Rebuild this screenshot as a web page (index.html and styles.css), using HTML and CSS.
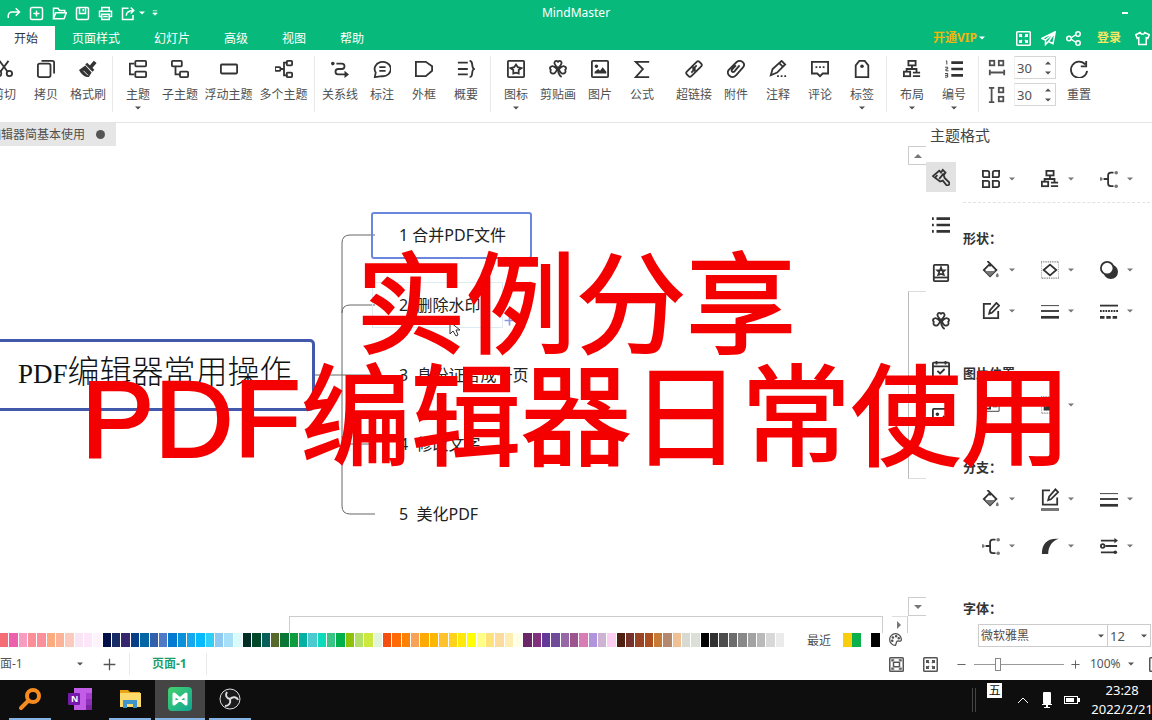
FILE: index.html
```html
<!DOCTYPE html>
<html lang="zh-CN">

<head>
    <meta charset="UTF-8">
    <meta name="viewport" content="width=device-width, initial-scale=1.0">
    <title>MindMaster</title>
    <link rel="stylesheet" href="styles.css">
</head>

<body>
    <svg class="sprite" aria-hidden="true">
        <symbol id="caret" viewBox="0 0 8 8"><path d="M0 2h8L4 6z" fill="currentColor" stroke="none"/></symbol>
        <symbol id="redo" viewBox="0 0 20 20"><path d="M13 3l5 5-5 5M18 8H8a5 5 0 0 0-5 5v3"/></symbol>
        <symbol id="new" viewBox="0 0 20 20"><rect x="2" y="2" width="16" height="16" rx="2"/><path d="M10 6v8M6 10h8"/></symbol>
        <symbol id="open" viewBox="0 0 20 20"><path d="M2 17V3h6l2 3h7v3M2 17l3-8h14l-3 8z"/></symbol>
        <symbol id="save" viewBox="0 0 20 20"><rect x="2" y="2" width="16" height="16" rx="2"/><path d="M6 2v8h8V2M11 4v3"/></symbol>
        <symbol id="print" viewBox="0 0 20 20"><path d="M5 7V2h10v5M5 14H2V7h16v7h-3M5 11h10v7H5zM7 14h6"/></symbol>
        <symbol id="export" viewBox="0 0 20 20"><path d="M10 3H2v15h14v-6M7 13c0-5 3-7 10-7M13 2l4 4-4 4"/></symbol>
        <symbol id="more" viewBox="0 0 8 10"><path d="M1 2h6M1 5h6L4 8z" fill="currentColor"/></symbol>
        <symbol id="full" viewBox="0 0 20 20"><rect x="1" y="1" width="18" height="18" rx="1"/><path d="M5 8V5h3M5 5l3 3M12 5h3v3M15 5l-3 3M5 12v3h3M5 15l3-3M15 12v3h-3M15 15l-3-3"/></symbol>
        <symbol id="send" viewBox="0 0 20 20"><path d="M1 10L19 1l-3 16-6-3-4 4v-6zM6 12L19 1l-9 13"/></symbol>
        <symbol id="share" viewBox="0 0 20 20"><circle cx="4" cy="10" r="3"/><circle cx="16" cy="4" r="3"/><circle cx="16" cy="16" r="3"/><path d="M7 9l6-4M7 11l6 4"/></symbol>
        <symbol id="shirt" viewBox="0 0 20 20"><path d="M7 2L1 5l2 5 2-1v9h10V9l2 1 2-5-6-3c-1 3-5 3-6 0z"/></symbol>

        <symbol id="cut" viewBox="0 0 20 20"><circle cx="4" cy="15" r="3"/><circle cx="16" cy="15" r="3"/><path d="M6 13L15 1M14 13L5 1"/></symbol>
        <symbol id="copy" viewBox="0 0 20 20"><rect x="1" y="4" width="14" height="15" rx="2"/><path d="M5 1h12a2 2 0 0 1 2 2v12"/></symbol>
        <symbol id="brush" viewBox="0 0 20 20"><path d="M0 11l7-5 7 8-3 5h-2c-4-1-7-4-9-8z" fill="currentColor" stroke="none"/><path d="M5 12l5 5" stroke="#fff" stroke-width="1"/><path d="M8 4l8 8" stroke-width="3"/><path d="M13 8l5-6" stroke-width="4"/></symbol>
        <symbol id="topic" viewBox="0 0 20 20"><path d="M6 4H1v12h5"/><rect x="7" y="1" width="12" height="6" rx="1"/><rect x="7" y="13" width="12" height="6" rx="1"/></symbol>
        <symbol id="subtopic" viewBox="0 0 20 20"><rect x="1" y="1" width="11" height="6" rx="1"/><rect x="10" y="13" width="9" height="6" rx="1"/><path d="M5 7v9h5"/></symbol>
        <symbol id="floating" viewBox="0 0 20 20"><rect x="1" y="5" width="18" height="10" rx="1"/></symbol>
        <symbol id="multi" viewBox="0 0 20 20"><rect x="0" y="8" width="6" height="4" rx="1"/><path d="M6 10h4M14 3h-4v14h4"/><rect x="13" y="1" width="6" height="5" rx="1"/><rect x="13" y="14" width="6" height="5" rx="1"/></symbol>
        <symbol id="relation" viewBox="0 0 20 20"><circle cx="2" cy="4" r="2" fill="currentColor" stroke="none"/><path d="M6 4h6a3 3 0 0 1 0 6H8a3 3 0 0 0 0 6h8"/><path d="M15 12l5 4-5 4z" fill="currentColor" stroke="none"/></symbol>
        <symbol id="callout" viewBox="0 0 20 20"><path d="M2 19l1-5a9 8 0 1 1 7 4zM7 8h7M7 12h7"/></symbol>
        <symbol id="outline" viewBox="0 0 20 20"><path d="M1 2h11l7 5v5l-7 6H1z"/></symbol>
        <symbol id="summary" viewBox="0 0 20 20"><path d="M1 3h11M1 10h11M1 16h11M14 1c5 0 1 7 5 9-4 1 0 9-5 9"/></symbol>
        <symbol id="mark" viewBox="0 0 20 20"><rect x="1" y="1" width="18" height="18" rx="1"/><path d="M10 5l2 3 4 1-3 2v4l-3-1-3 1V11L4 9l4-1z"/></symbol>
        <symbol id="clover" viewBox="0 0 20 20"><path d="M10 9C7 6 6 5 6 3c1-3 3-2 4-1 1-1 3-2 4 1 0 2-1 3-4 6zM9 10C7 8 5 6 3 7c-3 1-2 3-1 4-1 2 0 4 2 4 2 1 4-2 5-5zM11 10c2-2 4-4 6-3 3 1 2 3 1 4 1 2 0 4-2 4-2 1-4-2-5-5zM10 10c0 4 1 7 4 9"/></symbol>
        <symbol id="image" viewBox="0 0 20 20"><rect x="1" y="1" width="18" height="18" rx="1"/><circle cx="6" cy="7" r="1" fill="currentColor"/><path d="M4 15v-2l4-3 2 2 3-4 4 5v2z" fill="currentColor" stroke="none"/></symbol>
        <symbol id="sigma" viewBox="0 0 20 20"><path d="M18 2H3l8 8-8 9h15"/></symbol>
        <symbol id="link" viewBox="0 0 20 20"><path d="M7 8l6-6c1-1 2-1 3 0l2 2c1 1 1 2 0 3l-6 6-3-3 4-4M13 12l-6 6c-1 1-2 1-3 0l-2-2c-1-1-1-2 0-3l6-6 3 3-4 4"/></symbol>
        <symbol id="clip" viewBox="0 0 20 20"><path d="M7 6l4-4c5-3 10 2 7 6l-8 9c-4 5-12-1-8-6l6-6M14 6l-6 7c-2 1-4-1-2-3l4-4"/></symbol>
        <symbol id="note" viewBox="0 0 20 20"><path d="M2 17l2-7L14 1l4 4-9 9zM12 4l3 3"/><path d="M9 18h2M13 18h2M17 18h2"/></symbol>
        <symbol id="comment" viewBox="0 0 20 20"><path d="M1 2h18v13h-6l-3 3-3-3H1zM5 8h2M9 8h2M13 8h2"/></symbol>
        <symbol id="tag" viewBox="0 0 20 20"><path d="M3 19V6l4-5h6l4 5v13z"/><circle cx="10" cy="7" r="2" fill="currentColor" stroke="none"/></symbol>
        <symbol id="layout" viewBox="0 0 20 20"><rect x="6" y="1" width="8" height="5"/><path d="M10 6v4M4 13v-3h11v3M11 14h8M11 18h8"/><rect x="1" y="13" width="7" height="5"/></symbol>
        <symbol id="number" viewBox="0 0 20 20"><path d="M7 3h13M7 10h13M7 17h13" stroke-width="3"/><path d="M1 1h1v4M0 8h3v2H1v2h3M0 15h3v4H0M0 17h3" stroke-width="1"/></symbol>
        <symbol id="hgap" viewBox="0 0 20 20"><rect x="2" y="2" width="5" height="5"/><rect x="12" y="2" width="5" height="5"/><path d="M2 12v6M18 12v6M2 15h16"/></symbol>
        <symbol id="vgap" viewBox="0 0 20 20"><rect x="12" y="2" width="5" height="5"/><rect x="12" y="12" width="5" height="5"/><path d="M1 2h6M1 18h6M4 2v16"/></symbol>
        <symbol id="reset" viewBox="0 0 20 20"><path d="M17 5a9 9 0 1 0 2 7M18 1v6h-6"/></symbol>

        <symbol id="paint" viewBox="0 0 20 20"><path d="M1 9l7-6 2 2 2-3 3 3-2 3 1 3 5 5c1 2-1 4-3 3l-4-5-3 1zM8 12l5-6M3 11l3-3"/></symbol>
        <symbol id="list" viewBox="0 0 20 20"><path d="M0 3h2M5 3h15M0 10h2M5 10h15M0 17h2M5 17h15" stroke-width="3"/></symbol>
        <symbol id="book" viewBox="0 0 20 20"><rect x="2" y="1" width="16" height="18" rx="1"/><path d="M2 15h16"/><path d="M10 4l1 3h3l-2 2 1 3-3-1-3 1 1-3-2-2h3z"/></symbol>
        <symbol id="task" viewBox="0 0 20 20"><rect x="1" y="3" width="18" height="16" rx="1"/><path d="M1 7h18M5 1v4M15 1v4M6 12l3 3 5-5"/></symbol>
        <symbol id="grid" viewBox="0 0 20 20"><path d="M1 1h5q2 0 2 2v5H3Q1 8 1 6zM19 1h-5q-2 0-2 2v5h5q2 0 2-2zM1 12h5q2 0 2 2v5H1zM12 12h5q2 0 2 2v3q0 2-2 2h-5z"/></symbol>
        <symbol id="branch" viewBox="0 0 20 20"><g fill="#777" stroke="none"><circle cx="1" cy="10" r="2"/><circle cx="18" cy="3" r="2"/><circle cx="18" cy="18" r="2"/></g><path d="M4 10h5M15 3h-3a3 3 0 0 0-3 3v9a3 3 0 0 0 3 3h3"/></symbol>
        <symbol id="fill" viewBox="0 0 20 20"><path d="M6 0l3 3v3M9 3l7 7-7 7-7-7z"/><path d="M3 11h12l-6 6z" fill="#777" stroke="none"/><path d="M17 13c3 4 1 5 0 5s-3-1 0-5z" fill="#777" stroke="none"/></symbol>
        <symbol id="shape" viewBox="0 0 20 20"><rect x="0" y="1" width="20" height="18" stroke-width="1" stroke-dasharray="1 1"/><path d="M3 10l7-6 7 6-7 6z"/></symbol>
        <symbol id="shadow" viewBox="0 0 20 20"><circle cx="12" cy="12" r="7" fill="currentColor"/><circle cx="8" cy="8" r="7" fill="#fff"/></symbol>
        <symbol id="edit" viewBox="0 0 20 20"><path d="M10 2H2v16h16v-8M8 13l1-4 7-8 3 3-8 8z"/></symbol>
        <symbol id="lines" viewBox="0 0 20 20"><path d="M0 4h20" stroke-width="1"/><path d="M0 10h20"/><path d="M0 17h20" stroke-width="3"/></symbol>
        <symbol id="dashes" viewBox="0 0 20 20"><path d="M0 4h20"/><path d="M0 10h20" stroke-dasharray="2 1"/><path d="M0 17h20" stroke-width="3" stroke-dasharray="5 2"/></symbol>
        <symbol id="pictext" viewBox="0 0 20 20"><path d="M1 6h8v8H1z"/><path d="M12 4h7v13H1M12 8h5M12 12h5" stroke-width="1"/></symbol>
        <symbol id="picbox" viewBox="0 0 20 20"><rect x="0" y="1" width="20" height="18" stroke-width="1" stroke-dasharray="1 1"/><path d="M4 5h12v10H4z"/><path d="M5 14l4-5 3 2 3-1v4z" fill="currentColor"/></symbol>
        <symbol id="horn" viewBox="0 0 20 20"><path d="M1 19C1 8 6 1 20 2c-7 2-12 8-12 17z" fill="currentColor" stroke="none"/></symbol>
        <symbol id="arrows" viewBox="0 0 20 20"><path d="M1 4h16M6 10h13M1 17h16"/><circle cx="3" cy="10" r="2"/><path d="M16 1l4 3-4 3z" fill="currentColor" stroke="none"/><circle cx="17" cy="17" r="2" fill="currentColor" stroke="none"/></symbol>
        <symbol id="palette" viewBox="0 0 20 20"><path d="M10 19a9 9 0 1 1 9-9c0 3-2 3-5 2-3 0-2 2-3 4z"/><circle cx="6" cy="7" r="1"/><circle cx="11" cy="5" r="1"/><circle cx="15" cy="8" r="1"/><circle cx="5" cy="12" r="1"/></symbol>
        <symbol id="fit" viewBox="0 0 20 20"><rect x="1" y="1" width="18" height="18" rx="1"/><rect x="6" y="7" width="8" height="6"/><path d="M4 6V4h3M13 4h3v2M4 14v2h3M13 16h3v-2"/></symbol>
        <symbol id="plus" viewBox="0 0 20 20"><path d="M10 1v18M1 10h18"/></symbol>
        <symbol id="minus" viewBox="0 0 20 20"><path d="M1 10h18"/></symbol>
    </svg>

    <header class="titlebar">
        <div class="title-row">
            <div class="quick">
                <button aria-label="重做"><svg><use href="#redo"/></svg></button>
                <button aria-label="新建"><svg><use href="#new"/></svg></button>
                <button aria-label="打开"><svg><use href="#open"/></svg></button>
                <button aria-label="保存"><svg><use href="#save"/></svg></button>
                <button aria-label="打印"><svg><use href="#print"/></svg></button>
                <button aria-label="导出"><svg><use href="#export"/></svg></button>
                <svg class="caret"><use href="#caret"/></svg>
                <svg class="caret more"><use href="#more"/></svg>
            </div>
            <span class="app-name">MindMaster</span>
            <button class="minimize" aria-label="最小化"><span></span></button>
        </div>
        <div class="tab-row">
            <nav class="tabs">
                <a href="#" class="active">开始</a>
                <a href="#">页面样式</a>
                <a href="#">幻灯片</a>
                <a href="#">高级</a>
                <a href="#">视图</a>
                <a href="#">帮助</a>
            </nav>
            <div class="account">
                <a href="#" class="vip">开通VIP</a>
                <svg class="caret"><use href="#caret"/></svg>
                <button class="first" aria-label="全屏"><svg><use href="#full"/></svg></button>
                <button aria-label="发送"><svg><use href="#send"/></svg></button>
                <button aria-label="分享"><svg><use href="#share"/></svg></button>
                <a href="#" class="login">登录</a>
                <button class="skin" aria-label="皮肤"><svg><use href="#shirt"/></svg></button>
            </div>
        </div>
    </header>

    <div class="ribbon">
        <div class="group">
            <button><svg><use href="#cut"/></svg>剪切</button>
            <button><svg><use href="#copy"/></svg>拷贝</button>
            <button><svg><use href="#brush"/></svg>格式刷</button>
        </div>
        <div class="group">
            <button><svg><use href="#topic"/></svg>主题<svg class="caret"><use href="#caret"/></svg></button>
            <button><svg><use href="#subtopic"/></svg>子主题</button>
            <button class="wide"><svg><use href="#floating"/></svg>浮动主题</button>
            <button class="wide"><svg><use href="#multi"/></svg>多个主题</button>
        </div>
        <div class="group">
            <button><svg><use href="#relation"/></svg>关系线</button>
            <button><svg><use href="#callout"/></svg>标注</button>
            <button><svg><use href="#outline"/></svg>外框</button>
            <button><svg><use href="#summary"/></svg>概要</button>
        </div>
        <div class="group plain">
            <button><svg><use href="#mark"/></svg>图标<svg class="caret"><use href="#caret"/></svg></button>
            <button><svg><use href="#clover"/></svg>剪贴画</button>
            <button><svg><use href="#image"/></svg>图片</button>
            <button><svg><use href="#sigma"/></svg>公式</button>
        </div>
        <div class="group">
            <button><svg><use href="#link"/></svg>超链接</button>
            <button><svg><use href="#clip"/></svg>附件</button>
            <button><svg><use href="#note"/></svg>注释</button>
            <button><svg><use href="#comment"/></svg>评论</button>
            <button><svg><use href="#tag"/></svg>标签<svg class="caret"><use href="#caret"/></svg></button>
        </div>
        <div class="group">
            <button><svg><use href="#layout"/></svg>布局<svg class="caret"><use href="#caret"/></svg></button>
            <button><svg><use href="#number"/></svg>编号<svg class="caret"><use href="#caret"/></svg></button>
        </div>
        <div class="spacing">
            <label><svg><use href="#hgap"/></svg><span class="spin"><input type="number" value="30" aria-label="水平间距"><span class="steps"><svg class="up"><use href="#caret"/></svg><svg><use href="#caret"/></svg></span></span></label>
            <label><svg><use href="#vgap"/></svg><span class="spin"><input type="number" value="30" aria-label="垂直间距"><span class="steps"><svg class="up"><use href="#caret"/></svg><svg><use href="#caret"/></svg></span></span></label>
        </div>
        <div class="group last">
            <button><svg><use href="#reset"/></svg>重置</button>
        </div>
    </div>

    <main class="workspace">
        <div class="editor">
            <div class="doc-tabs"><a href="#" class="doc-tab"><span>编辑器简基本使用</span><i></i></a></div>
            <div class="stage">
                <div class="canvas">
                    <svg class="links" width="600" height="470">
                        <path d="M315 229h60M375 89h-25q-8 0-8 8v263q0 8 8 8h25M342 167q0-8 8-8h25M342 290q0 8 8 8h25"/>
                    </svg>
                    <div class="node root"><span>PDF</span>编辑器常用操作</div>
                    <div class="node topic selected n1">1 合并PDF文件</div>
                    <div class="node topic hover n2">2&nbsp; 删除水印</div>
                    <div class="node topic n3">3&nbsp; 身份证合成一页</div>
                    <div class="node topic n4">4&nbsp; 修改文字</div>
                    <div class="node topic n5">5&nbsp; 美化PDF</div>
                    <svg class="add" viewBox="0 0 20 20"><use href="#plus"/></svg>
                    <svg class="cursor" viewBox="0 0 12 16"><path d="M1 1v12l3-3 3 5 2-1-2-5h4z"/></svg>
                </div>
                <div class="vscroll">
                    <button aria-label="向上滚动"><svg class="caret up"><use href="#caret"/></svg></button>
                    <div class="thumb"></div>
                    <button class="down" aria-label="向下滚动"><svg class="caret"><use href="#caret"/></svg></button>
                </div>
            </div>
            <div class="hscroll">
                <div class="thumb"></div>
                <button aria-label="向右滚动"><svg class="caret right"><use href="#caret"/></svg></button>
            </div>
            <div class="colors">
                <div class="swatches" id="swatches"></div>
                <div class="recent">
                    <span>最近</span>
                    <i class="yellow"></i><i class="green"></i><i class="white"></i><i class="black"></i>
                    <svg><use href="#palette"/></svg>
                </div>
            </div>
        </div>

        <aside class="panel">
            <h2>主题格式</h2>
            <div class="panel-body">
                <nav class="side">
                    <button class="active" aria-label="主题格式"><svg><use href="#paint"/></svg></button>
                    <button aria-label="大纲"><svg><use href="#list"/></svg></button>
                    <button aria-label="图标"><svg><use href="#book"/></svg></button>
                    <button aria-label="剪贴画"><svg><use href="#clover"/></svg></button>
                    <button aria-label="任务"><svg><use href="#task"/></svg></button>
                    <button aria-label="图片"><svg><use href="#image"/></svg></button>
                </nav>
                <div class="format">
                    <div class="row top">
                        <button aria-label="样式"><svg><use href="#grid"/></svg><svg class="caret"><use href="#caret"/></svg></button>
                        <button aria-label="布局"><svg><use href="#layout"/></svg><svg class="caret"><use href="#caret"/></svg></button>
                        <button aria-label="连线"><svg><use href="#branch"/></svg><svg class="caret"><use href="#caret"/></svg></button>
                    </div>
                    <h3 class="shape-title">形状：</h3>
                    <div class="row">
                        <button aria-label="填充"><svg><use href="#fill"/></svg><svg class="caret"><use href="#caret"/></svg></button>
                        <button aria-label="形状"><svg><use href="#shape"/></svg><svg class="caret"><use href="#caret"/></svg></button>
                        <button aria-label="阴影"><svg><use href="#shadow"/></svg><svg class="caret"><use href="#caret"/></svg></button>
                    </div>
                    <div class="row">
                        <button aria-label="边框颜色"><svg><use href="#edit"/></svg><svg class="caret"><use href="#caret"/></svg></button>
                        <button aria-label="边框粗细"><svg><use href="#lines"/></svg><svg class="caret"><use href="#caret"/></svg></button>
                        <button aria-label="边框线型"><svg><use href="#dashes"/></svg><svg class="caret"><use href="#caret"/></svg></button>
                    </div>
                    <h3>图片位置</h3>
                    <div class="row">
                        <button aria-label="图文排列"><svg><use href="#pictext"/></svg><svg class="caret"><use href="#caret"/></svg></button>
                        <button aria-label="图片大小"><svg><use href="#picbox"/></svg><svg class="caret"><use href="#caret"/></svg></button>
                    </div>
                    <h3>分支：</h3>
                    <div class="row">
                        <button aria-label="分支填充"><svg><use href="#fill"/></svg><svg class="caret"><use href="#caret"/></svg></button>
                        <button aria-label="分支颜色"><svg class="underlined"><use href="#edit"/></svg><svg class="caret"><use href="#caret"/></svg></button>
                        <button aria-label="分支粗细"><svg><use href="#lines"/></svg><svg class="caret"><use href="#caret"/></svg></button>
                    </div>
                    <div class="row spaced">
                        <button aria-label="分支形状"><svg><use href="#branch"/></svg><svg class="caret"><use href="#caret"/></svg></button>
                        <button aria-label="分支样式"><svg><use href="#horn"/></svg><svg class="caret"><use href="#caret"/></svg></button>
                        <button aria-label="箭头"><svg><use href="#arrows"/></svg><svg class="caret"><use href="#caret"/></svg></button>
                    </div>
                    <h3>字体：</h3>
                    <div class="font-row">
                        <label class="pick family"><select aria-label="字体"><option>微软雅黑</option></select><svg class="caret"><use href="#caret"/></svg></label>
                        <label class="pick size"><select aria-label="字号"><option>12</option></select><svg class="caret"><use href="#caret"/></svg></label>
                    </div>
                </div>
            </div>
        </aside>
    </main>

    <div class="statusbar">
        <div class="pages">
            <button class="page-pick"><span>页面-1</span><svg class="caret"><use href="#caret"/></svg></button>
            <button class="add-page" aria-label="新建页面"><svg><use href="#plus"/></svg></button>
            <a href="#" class="page">页面-1</a>
        </div>
        <div class="zoom">
            <button aria-label="适应页面"><svg><use href="#fit"/></svg></button>
            <button aria-label="全屏"><svg><use href="#full"/></svg></button>
            <button class="small" aria-label="缩小"><svg><use href="#minus"/></svg></button>
            <input type="range" min="0" max="100" value="25" aria-label="缩放">
            <button class="small" aria-label="放大"><svg><use href="#plus"/></svg></button>
            <span>100%</span>
            <svg class="caret"><use href="#caret"/></svg>
            <button class="window" aria-label="窗口"><svg><use href="#full"/></svg></button>
        </div>
    </div>

    <footer class="taskbar">
        <div class="apps">
            <button class="open" aria-label="搜索">
                <svg viewBox="0 0 24 24"><circle cx="15" cy="9" r="6" fill="none" stroke="#f68b1f" stroke-width="4"/><path d="M10 14l-7 7" stroke="#f68b1f" stroke-width="4" stroke-linecap="round"/></svg>
            </button>
            <button aria-label="OneNote">
                <svg viewBox="0 0 24 24"><path d="M6 1h18v22H6z" fill="#c25de8"/><path d="M18 6h6v6h-6z" fill="#a63ed0"/><path d="M18 12h6v6h-6z" fill="#8f2fba"/><path d="M18 18h6v5h-6z" fill="#7a259f"/><rect x="0" y="6" width="12" height="12" rx="1" fill="#7719aa"/><text x="3" y="15" class="logo-n">N</text></svg>
            </button>
            <button class="open" aria-label="文件资源管理器">
                <svg viewBox="0 0 24 24"><path d="M2 3h8l2 2h10v15H2z" fill="#e8a317"/><path d="M2 6h21v14H2z" fill="#fbd96b"/><path d="M5 21v-8h14v8h-4v-4H9v4z" fill="#3f94cc"/></svg>
            </button>
            <button class="open current" aria-label="MindMaster">
                <svg viewBox="0 0 24 24"><defs><linearGradient id="mm" x1="0" y1="0" x2="1" y2="1"><stop offset="0" stop-color="#45d16b"/><stop offset="1" stop-color="#0fa596"/></linearGradient></defs><rect width="24" height="24" rx="4" fill="url(#mm)"/><path d="M6 7v10l12-10v10L6 7z" fill="none" stroke="#fff" stroke-width="3" stroke-linejoin="round"/></svg>
            </button>
            <button class="open" aria-label="OBS">
                <svg viewBox="0 0 24 24"><circle cx="12" cy="12" r="10" fill="#1b1a1d" stroke="#ddd" stroke-width="1"/><path d="M12 12c-4-1-5-4-3-7M12 12c3-3 7-2 8 1M12 12c1 4-1 7-5 7" fill="none" stroke="#ddd" stroke-width="2"/></svg>
            </button>
        </div>
        <div class="tray">
            <span class="handle"></span>
            <span class="ime">五</span>
            <svg class="chevron" viewBox="0 0 12 12"><path d="M1 9l5-5 5 5"/></svg>
            <svg class="mic" viewBox="0 0 12 18"><rect x="2" y="1" width="8" height="12" rx="1"/><path d="M1 13h10v1H1zM5 14h2v3H5zM3 16h6v1H3z"/></svg>
            <svg class="battery" viewBox="0 0 16 10"><path d="M0 1h14v8H0zM14 3h2v4h-2z"/><path d="M1 2h12v6H1z" fill="#0e0e0e"/><path d="M2 3h8v4H2z"/></svg>
            <div class="clock"><span>23:28</span><span>2022/2/21</span></div>
        </div>
    </footer>

    <h1 class="caption">实例分享<br>PDF编辑器日常使用</h1>

    <script>
        const colors = [
            // reds
            "f46d75", "ee5fae", "f59ec0", "fb8f98", "fb8f9c", "fbab7e", "fcb398", "fccabd", "f9e4f5", "fce6f7", "fdf3fd",
            // blues
            "020f4a", "172b66", "35266e", "063f87", "0365a3", "3160ac", "5079c6", "0379d0", "0a8fdb", "16a8ea", "06baff", "2fcff8", "8ccaf2", "a8dff8", "dafafb",
            // greens
            "002d25", "00482a", "07605a", "56682a", "0a7638", "0f9c3f", "04b0a2", "4dcad0", "0cdcba", "3cc486", "00b04c", "8cc207", "b2e067", "cce83c", "e2f3dc",
            // oranges and yellows
            "f44f10", "ff6a05", "ff8003", "f7a258", "ffa904", "ffb600", "ffc12c", "ffd21c", "ffe80a", "ffff00", "ffff88", "ffe17a", "fbdc9c", "fdedb0", "ffffe8",
            // purples
            "6e2766", "82307e", "64389a", "704b99", "9768a8", "9d5590", "d97bb5", "b095dc", "cdb2d4", "fbcff0",
            // browns
            "4f200f", "76322a", "9a4424", "ad4e1f", "c87a36", "b4886c", "eec092", "d9d9d3", "dbdfd8",
            // greys
            "000000", "303030", "4c4c4c", "6c6c6c", "888888", "a2a2a2", "bababa", "d8d8d8", "ebebeb"
        ];

        const swatches = document.getElementById("swatches");
        colors.forEach(function (color) {
            const item = document.createElement("i");
            item.style.backgroundColor = "#" + color;
            swatches.appendChild(item);
        });
    </script>
</body>

</html>
```

FILE: styles.css
```css
* {
    box-sizing: border-box;
}

body {
    position: relative;
    display: flex;
    flex-direction: column;
    height: 100vh;
    margin: 0;
    overflow: hidden;
    background-color: #fff;
    color: #505050;
    font-family: "Noto Sans", "Noto Sans CJK SC", sans-serif;
    font-size: 12px;
    line-height: 16px;
}

button,
input,
select {
    margin: 0;
    padding: 0;
    border: none;
    background: none;
    color: inherit;
    font: inherit;
}

a {
    color: inherit;
    text-decoration: none;
}

svg {
    flex: none;
    display: block;
    width: 18px;
    height: 18px;
    overflow: visible;
    fill: none;
    stroke: currentColor;
    stroke-width: 2;
}

.sprite {
    position: absolute;
    width: 0;
    height: 0;
}

.caret {
    width: 6px;
    height: 6px;
}

.up {
    transform: rotate(180deg);
}

.right {
    transform: rotate(-90deg);
}

/* title bar */
.titlebar {
    flex: none;
    background-color: #07b97b;
    color: #fff;
}

.title-row {
    display: grid;
    grid-template-columns: 1fr auto 1fr;
    align-items: center;
    height: 26px;
}

.quick {
    display: flex;
    align-items: center;
    gap: 8px;
    padding-left: 6px;
}

.quick svg {
    width: 15px;
    height: 15px;
}

.quick .caret {
    width: 6px;
    height: 6px;
    margin-left: -5px;
}

.quick .more {
    height: 8px;
    margin-left: -1px;
    stroke-width: 1;
}

.minimize {
    justify-self: end;
    padding: 8px 24px;
}

.minimize span {
    display: block;
    width: 6px;
    height: 2px;
    background-color: #fff;
}

.tab-row {
    display: flex;
    justify-content: space-between;
    height: 24px;
}

.tabs {
    display: flex;
    margin-left: -3px;
}

.tabs a {
    padding: 5px 17px 3px;
}

.tabs .active {
    background-color: #fff;
    color: #333;
}

.account {
    display: flex;
    align-items: center;
    margin-right: 2px;
}

.account button {
    margin-right: 10px;
}

.account button svg {
    width: 15px;
    height: 15px;
}

.account .first {
    margin-left: 31px;
}

.vip {
    margin-right: 2px;
    color: #f2b50c;
    font-weight: bold;
}

.login {
    margin: 0 14px 0 6px;
    color: #f5e663;
    font-weight: bold;
}

.account .skin {
    margin-right: 0;
}

/* ribbon */
.ribbon {
    display: flex;
    flex: none;
    height: 73px;
    padding-top: 6px;
    border-bottom: 1px solid #e4e4e4;
    background-color: #fff;
}

.group {
    display: flex;
    flex: none;
    height: 56px;
    padding: 0 3px 0 4px;
    border-right: 1px solid #e8e8e8;
}

.group:first-child {
    margin-left: -21px;
}

.group.plain {
    padding-right: 5px;
    border-color: transparent;
}

.group.last {
    padding-left: 2px;
    border-color: transparent;
}

.group button {
    display: flex;
    flex-direction: column;
    align-items: center;
    width: 42px;
    padding-top: 4px;
    white-space: nowrap;
}

.group .wide {
    width: 55px;
}

.group button svg:first-child {
    margin-bottom: 9px;
    color: #333;
}

.group .caret {
    margin-top: 2px;
}

.spacing {
    display: flex;
    flex-direction: column;
    gap: 4px;
    padding-left: 9px;
}

.spacing label {
    display: flex;
    align-items: center;
    gap: 8px;
}

.spin {
    display: flex;
    align-items: center;
    width: 42px;
    height: 23px;
    border: 1px solid #d5d5d5;
    border-left-color: #f0f0f0;
    font-size: 13px;
}

.spin input {
    width: 30px;
    padding-left: 2px;
    appearance: textfield;
    outline: none;
}

.spin input::-webkit-inner-spin-button {
    display: none;
}

.steps {
    display: flex;
    flex-direction: column;
    gap: 4px;
}

.steps svg {
    width: 6px;
    height: 6px;
}

/* workspace */
.workspace {
    display: flex;
    flex: 1;
    min-height: 0;
}

.editor {
    display: flex;
    flex: 1;
    flex-direction: column;
    min-width: 0;
}

.doc-tabs {
    display: flex;
    flex: none;
}

.doc-tab {
    display: flex;
    align-items: center;
    gap: 11px;
    height: 23px;
    margin-left: -11px;
    padding-right: 11px;
    background-color: #e6e6e6;
}

.doc-tab i {
    width: 9px;
    height: 9px;
    border-radius: 50%;
    background-color: #555;
}

.stage {
    display: flex;
    flex: 1;
    min-height: 0;
}

.canvas {
    position: relative;
    flex: 1;
    overflow: hidden;
}

.links {
    position: absolute;
    top: 0;
    left: 0;
    width: 600px;
    height: 470px;
    stroke: #666;
    stroke-width: 1;
}

.node {
    position: absolute;
    white-space: nowrap;
}

.root {
    top: 193px;
    left: -10px;
    width: 325px;
    height: 72px;
    padding-left: 25px;
    border: 3px solid #4259ab;
    border-radius: 5px;
    background-color: #fff;
    color: #111;
    font-size: 32px;
    font-weight: 300;
    line-height: 58px;
}

.root span {
    font-family: "Liberation Serif", serif;
    font-size: 27px;
}

.topic {
    left: 372px;
    height: 46px;
    padding: 0 26px;
    border: 1px solid transparent;
    color: #222;
    font-size: 16px;
    line-height: 44px;
}

.selected {
    left: 371px;
    padding-right: 24px;
    border: 2px solid #6b86dd;
    border-radius: 3px;
}

.hover {
    padding-right: 22px;
    border-color: #dcebf4;
}

.n1 {
    top: 66px;
    height: 47px;
    line-height: 42px;
}

.n2 {
    top: 136px;
}

.n3 {
    top: 206px;
}

.n4 {
    top: 275px;
}

.n5 {
    top: 345px;
}

.add {
    position: absolute;
    top: 169px;
    left: 504px;
    width: 11px;
    height: 11px;
    color: #8b97e0;
    stroke-width: 3;
}

.cursor {
    position: absolute;
    top: 175px;
    left: 449px;
    width: 12px;
    height: 16px;
    fill: #fff;
    stroke: #333;
    stroke-width: 1;
}

.vscroll {
    display: flex;
    flex-direction: column;
    width: 18px;
    color: #777;
}

.vscroll button {
    display: grid;
    place-items: center;
    height: 19px;
    border: 1px solid #ccc;
    border-right: none;
}

.vscroll .caret,
.hscroll .caret {
    width: 8px;
    height: 8px;
}

.vscroll .thumb {
    height: 40%;
    margin-top: 126px;
    border: 1px solid #ddd;
    border-left-color: #bbb;
    border-right: none;
}

.vscroll .down {
    margin-top: auto;
}

.hscroll {
    display: flex;
    flex: none;
    height: 17px;
    color: #777;
}

.hscroll .thumb {
    flex: 1;
    margin: 0 9px 0 289px;
    border: 1px solid #ccc;
    border-bottom: none;
}

.hscroll button {
    width: 16px;
    margin-right: 18px;
    padding-left: 3px;
    border-top: 1px solid #ddd;
    border-right: 1px solid #ccc;
}

.colors {
    display: flex;
    flex: none;
    height: 15px;
}

.swatches {
    display: flex;
    flex: 1;
    gap: 1px;
}

.swatches i {
    flex: 1;
    height: 14px;
}

.recent {
    display: flex;
    width: 142px;
    padding-left: 23px;
}

.recent span {
    margin-right: 12px;
}

.recent i {
    width: 9px;
    height: 14px;
}

.recent .yellow {
    background-color: #f8ce0f;
}

.recent .green {
    background-color: #0bb04a;
}

.recent .white {
    width: 10px;
}

.recent .black {
    background-color: #000;
}

.recent svg {
    width: 13px;
    height: 13px;
    margin-left: 9px;
}

/* format panel */
.panel {
    width: 226px;
    overflow: hidden;
}

.panel h2 {
    height: 39px;
    margin: 0;
    padding: 4px;
    color: #444;
    font-size: 15px;
    font-weight: normal;
    line-height: 17px;
}

.panel-body {
    display: flex;
    gap: 7px;
}

.side {
    display: flex;
    flex-direction: column;
    gap: 18px;
}

.side button {
    display: grid;
    place-items: center;
    width: 30px;
    height: 30px;
    color: #333;
}

.side .active {
    background-color: #e2e2e2;
}

.format {
    flex: 1;
}

.format h3 {
    height: 22px;
    margin: 31px 0 0;
    color: #333;
    font-size: 13px;
    font-weight: bold;
    line-height: 22px;
}

.format .shape-title {
    margin-top: 24px;
}

.row {
    display: grid;
    grid-template-columns: repeat(3, 59px);
    height: 41px;
    padding-left: 15px;
}

.row.top {
    padding-bottom: 7px;
    border-bottom: 1px dashed #e2e2e2;
}

.row.spaced {
    margin-top: 6px;
}

.row button {
    display: flex;
    align-items: center;
    gap: 9px;
    padding-left: 4px;
    color: #333;
}

.row .caret {
    color: #777;
}

.row .underlined {
    height: 24px;
    border-bottom: 3px solid #777;
}

.font-row {
    display: flex;
    margin: 5px 4px 0 15px;
}

.pick {
    display: flex;
    align-items: center;
    height: 23px;
    padding: 0 3px 0 2px;
    border: 1px solid #ccc;
}

.pick select {
    flex: 1;
    min-width: 0;
    appearance: none;
    outline: none;
}

.family {
    flex: 1;
}

.size {
    width: 44px;
    margin-left: -1px;
    font-size: 13px;
}

/* status bar */
.statusbar {
    display: flex;
    flex: none;
    justify-content: space-between;
    height: 32px;
    color: #555;
}

.pages,
.zoom {
    display: flex;
    align-items: center;
}

.page-pick {
    display: flex;
    align-items: center;
    justify-content: space-between;
    width: 95px;
    margin-left: -12px;
}

.add-page {
    padding: 0 13px 0 20px;
}

.add-page svg {
    width: 13px;
    height: 13px;
}

.page {
    padding: 3px 19px 3px 22px;
    border: 1px solid #e8e8e8;
    border-width: 0 1px;
    color: #1c9f70;
    font-weight: bold;
}

.zoom {
    width: 263px;
    gap: 7px;
}

.zoom button {
    margin-right: 12px;
}

.zoom button svg {
    width: 15px;
    height: 15px;
}

.zoom .small {
    margin-right: 1px;
}

.zoom .small svg {
    width: 9px;
    height: 9px;
}

.zoom span {
    margin-left: 2px;
}

.zoom .window {
    margin: 0 0 0 8px;
}

.zoom input {
    width: 90px;
    height: 14px;
    appearance: none;
    background: linear-gradient(#999, #999) center / 100% 1px no-repeat;
}

.zoom input::-webkit-slider-thumb {
    width: 6px;
    height: 13px;
    appearance: none;
    border: 1px solid #888;
    background-color: #fff;
}

/* taskbar */
.taskbar {
    display: flex;
    flex: none;
    justify-content: space-between;
    height: 40px;
    background-color: #0e0e0e;
    color: #fff;
}

.apps {
    display: flex;
    gap: 8px;
    padding-left: 9px;
}

.apps button {
    display: grid;
    place-items: center;
    width: 42px;
    border-bottom: 2px solid transparent;
}

.apps svg {
    width: 24px;
    height: 24px;
    stroke: none;
}

.apps .open {
    border-color: #84b4e4;
}

.apps .current {
    width: 50px;
    margin: 0 -4px;
    background-color: #454545;
}

.logo-n {
    fill: #fff;
    font-size: 9px;
    font-weight: bold;
}

.tray {
    display: flex;
    align-items: center;
    margin-right: -1px;
}

.handle {
    width: 4px;
    height: 24px;
    border: 1px solid #444;
    border-width: 0 1px;
}

.ime {
    align-self: flex-start;
    width: 15px;
    height: 15px;
    margin: 3px 15px 0 11px;
    background-color: #fff;
    color: #111;
    line-height: 15px;
    text-align: center;
}

.chevron {
    width: 12px;
    height: 12px;
    stroke-width: 1;
}

.mic {
    width: 12px;
    height: 18px;
    margin: 0 11px 0 12px;
    fill: #fff;
    stroke: none;
}

.battery {
    width: 16px;
    height: 10px;
    fill: #fff;
    stroke: none;
}

.clock {
    display: flex;
    flex-direction: column;
    align-items: center;
    margin-left: 11px;
    font-size: 13px;
    line-height: 19px;
}

/* video caption over the whole screen */
.caption {
    position: absolute;
    top: 251px;
    right: 0;
    left: 0;
    margin: 0;
    color: #f40000;
    font-family: "Liberation Sans", "Noto Sans CJK SC", sans-serif;
    font-size: 110px;
    font-weight: normal;
    line-height: 112px;
    text-align: center;
    white-space: nowrap;
    pointer-events: none;
    -webkit-text-stroke: 2px #f40000;
}
```
